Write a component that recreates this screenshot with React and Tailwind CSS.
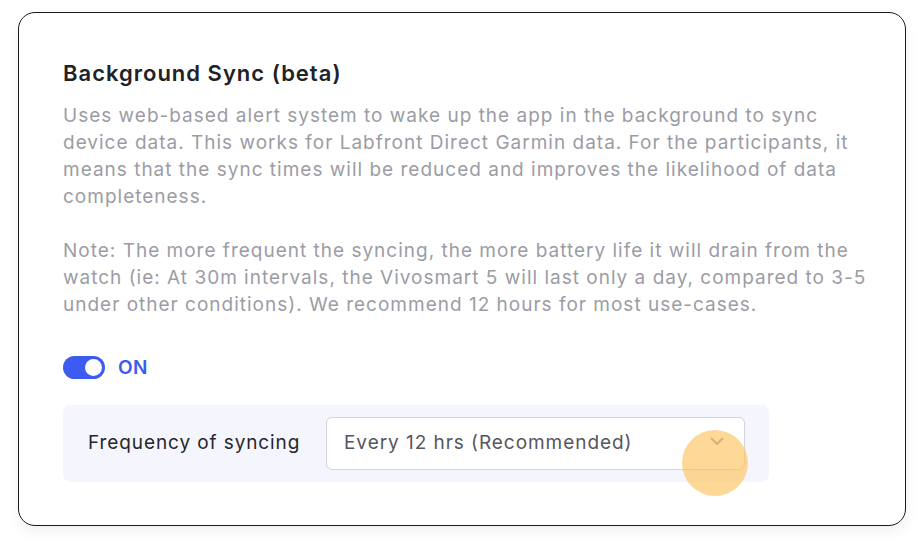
import React, { useState } from 'react';

const App = () => {
  const [enabled, setEnabled] = useState(true);

  return (
    <div
      className="min-h-[551px] w-[924px] bg-white pl-[18px] pt-[12px]"
      style={{ fontFamily: 'Inter, "Noto Sans", sans-serif' }}
    >
      <div className="relative w-[888px] h-[514px] rounded-[17px] border-[1.5px] border-[#1a1a1a] bg-white px-[44px] pt-[45px] shadow-[0_6px_14px_rgba(0,0,0,0.06)]">
        <h2 className="text-[22px] leading-[30px] font-semibold tracking-[1px] text-[#222226]">
          Background Sync (beta)
        </h2>

        <p className="mt-[14px] whitespace-nowrap text-[19px] leading-[27px] tracking-[1px] text-[#9c9ca5]">
          Uses web-based alert system to wake up the app in the background to sync
          <br />
          device data. This works for Labfront Direct Garmin data. For the participants, it
          <br />
          means that the sync times will be reduced and improves the likelihood of data
          <br />
          completeness.
          <br />
          <br />
          Note: The more frequent the syncing, the more battery life it will drain from the
          <br />
          watch (ie: At 30m intervals, the Vivosmart 5 will last only a day, compared to 3-5
          <br />
          under other conditions). We recommend 12 hours for most use-cases.
        </p>

        {/* Toggle */}
        <div className="mt-[38px] flex items-center gap-[13px]">
          <button
            type="button"
            onClick={() => setEnabled(!enabled)}
            className={`relative h-[23px] w-[42px] rounded-full ${enabled ? 'bg-[#3c5bf0]' : 'bg-gray-300'}`}
          >
            <span
              className={`absolute top-[3px] h-[17px] w-[17px] rounded-full bg-white ${enabled ? 'left-[22px]' : 'left-[3px]'}`}
            />
          </button>
          <span className="text-[19px] leading-none font-semibold tracking-[0.5px] text-[#3c5bf0]">
            {enabled ? 'ON' : 'OFF'}
          </span>
        </div>

        {/* Frequency */}
        <div className="mt-[26px] flex h-[77px] w-[706px] items-center justify-between rounded-[7px] bg-[#f5f6fd] pl-[25px] pr-[24px]">
          <span className="text-[19px] tracking-[0.9px] text-[#26262b]">Frequency of syncing</span>
          <div className="relative flex h-[53px] w-[419px] items-center justify-between rounded-[6px] border border-[#d4d4da] bg-white pl-[17px] pr-[20px]">
            <span className="text-[19px] tracking-[0.95px] text-[#56565e]">Every 12 hrs (Recommended)</span>
            <svg width="14" height="9" viewBox="0 0 14 9" className="mb-[4px]">
              <path d="M1.5 1.5 L7 7 L12.5 1.5" fill="none" stroke="#8a8a92" strokeWidth="1.8" strokeLinecap="round" strokeLinejoin="round" />
            </svg>
            <span className="absolute left-[355px] top-[12px] h-[66px] w-[66px] rounded-full bg-[#fcc35e]/65" />
          </div>
        </div>
      </div>
    </div>
  );
};

export default App;
